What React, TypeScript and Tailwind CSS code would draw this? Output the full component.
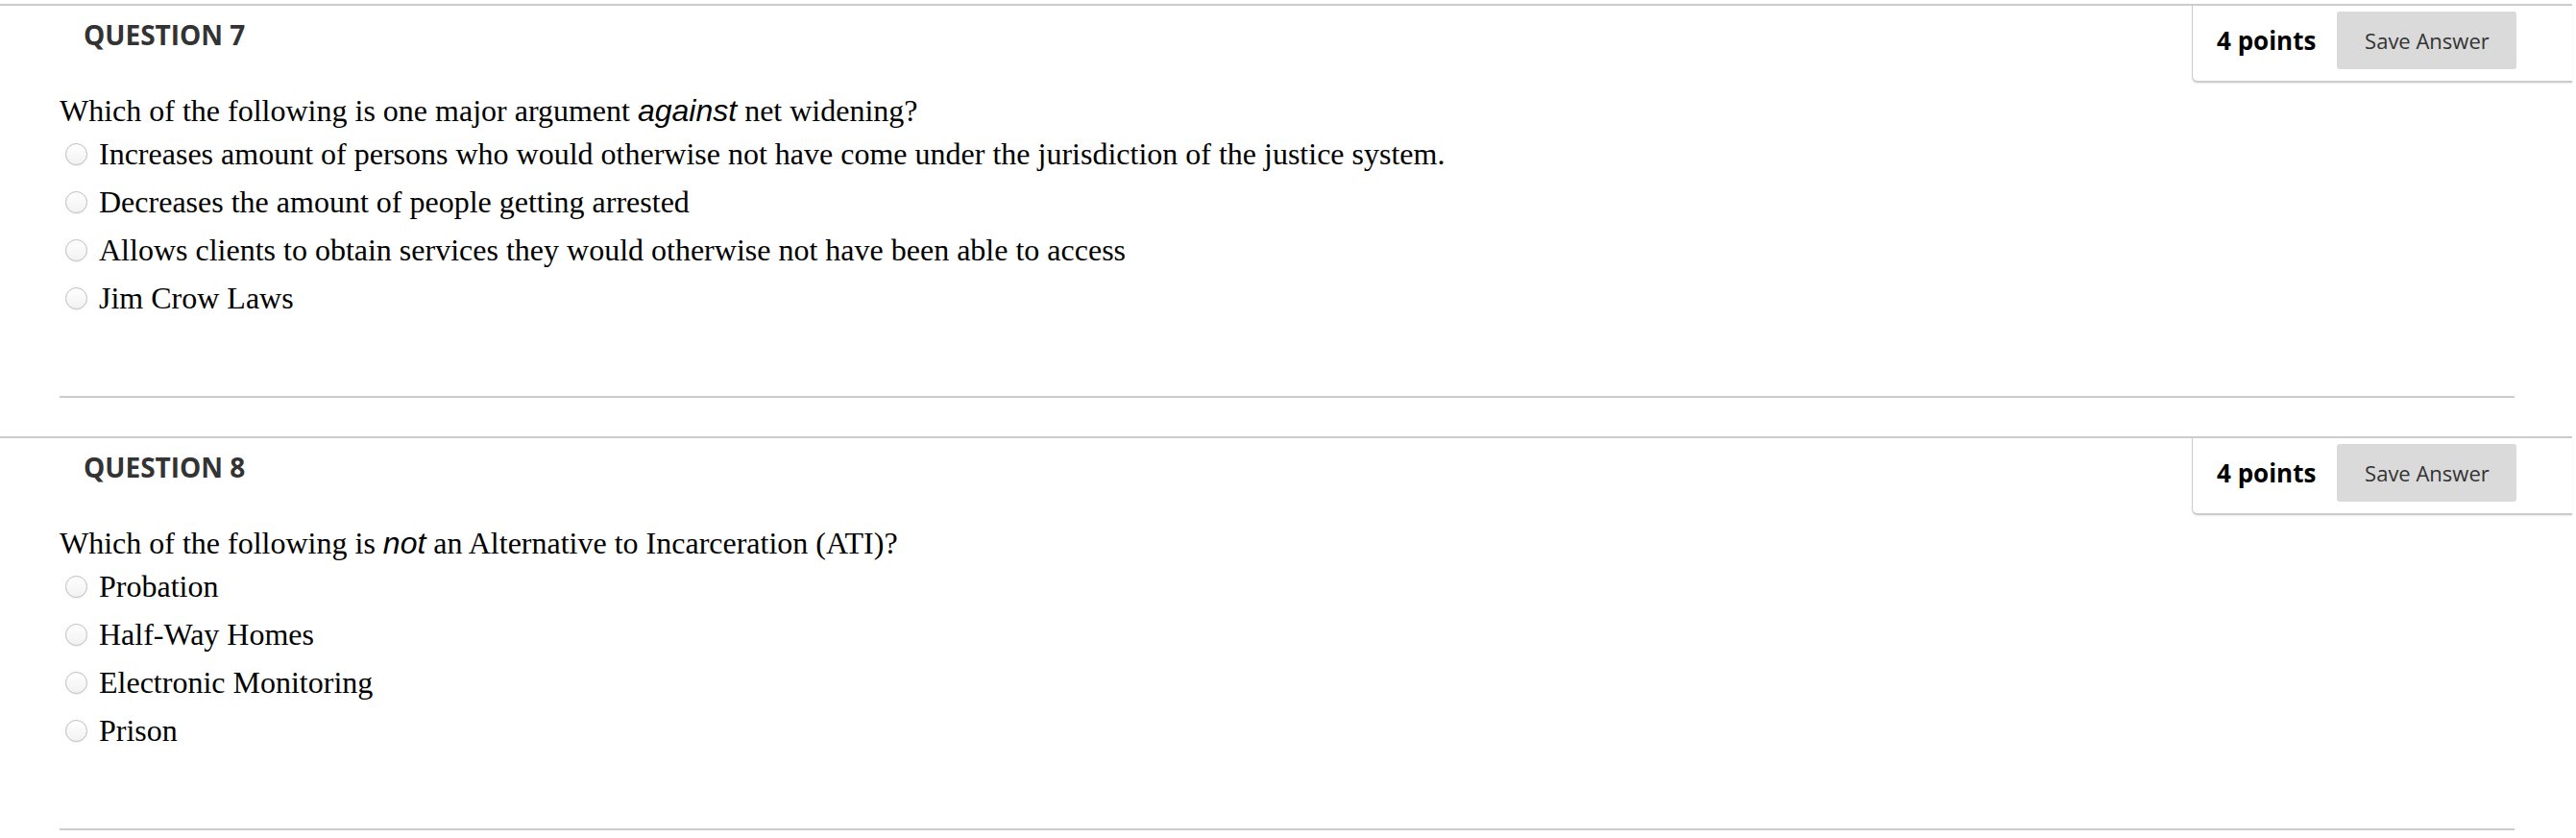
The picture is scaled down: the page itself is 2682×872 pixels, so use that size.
import React from "react";

interface Question {
  number: number;
  points: number;
  prompt: React.ReactNode;
  options: string[];
}

const questions: Question[] = [
  {
    number: 7,
    points: 4,
    prompt: (
      <>
        Which of the following is one major argument{" "}
        <em className="font-['Liberation_Sans',Arial,sans-serif]">against</em> net widening?
      </>
    ),
    options: [
      "Increases amount of persons who would otherwise not have come under the jurisdiction of the justice system.",
      "Decreases the amount of people getting arrested",
      "Allows clients to obtain services they would otherwise not have been able to access",
      "Jim Crow Laws",
    ],
  },
  {
    number: 8,
    points: 4,
    prompt: (
      <>
        Which of the following is{" "}
        <em className="font-['Liberation_Sans',Arial,sans-serif]">not</em> an Alternative to Incarceration (ATI)?
      </>
    ),
    options: ["Probation", "Half-Way Homes", "Electronic Monitoring", "Prison"],
  },
];

function Radio() {
  return (
    <span className="inline-block h-[23px] w-[23px] shrink-0 rounded-full border border-[#bdbdbd] bg-gradient-to-b from-white to-[#f2f2f2] shadow-[0_1px_1px_rgba(0,0,0,0.06)]" />
  );
}

function QuestionBlock({ q }: { q: Question }) {
  return (
    <section className="h-[450px] border-t-2 border-[#cccccc]">
      <div className="flex items-start justify-between">
        <h2 className="pl-[87px] pt-[16px] font-['Open_Sans',sans-serif] text-[28px] font-bold leading-[28px] text-[#333333]">
          QUESTION {q.number}
        </h2>
        <div className="flex h-[80px] w-[396px] items-start gap-[22px] rounded-bl-[6px] border-b-2 border-l border-[#cccccc] pl-[25px] pt-[6px] shadow-[0_1px_2px_rgba(0,0,0,0.08)]">
          <span className="mt-[15px] font-['Open_Sans',sans-serif] text-[26px] font-bold leading-[30px] text-black">
            {q.points} points
          </span>
          <button className="h-[60px] w-[187px] rounded-[3px] bg-[#dadada] font-['Open_Sans',sans-serif] text-[22px] text-[#333333]">
            Save Answer
          </button>
        </div>
      </div>
      <div className="pl-[62px] pr-[60px] font-['Liberation_Serif','Times_New_Roman',serif] text-[32px] text-black">
        <p className="mt-[9px] h-[40px] leading-[40px]">{q.prompt}</p>
        <ul>
          {q.options.map((opt) => (
            <li key={opt} className="flex h-[50px] items-center gap-[12px] pl-[6px]">
              <Radio />
              <span className="leading-[50px]">{opt}</span>
            </li>
          ))}
        </ul>
        <div className="mt-[77px] h-[2px] bg-[#cccccc]" />
      </div>
    </section>
  );
}

export default function App() {
  return (
    <div className="min-h-[872px] bg-white pr-[4px] pt-[4px]">
      {questions.map((q) => (
        <QuestionBlock key={q.number} q={q} />
      ))}
    </div>
  );
}
